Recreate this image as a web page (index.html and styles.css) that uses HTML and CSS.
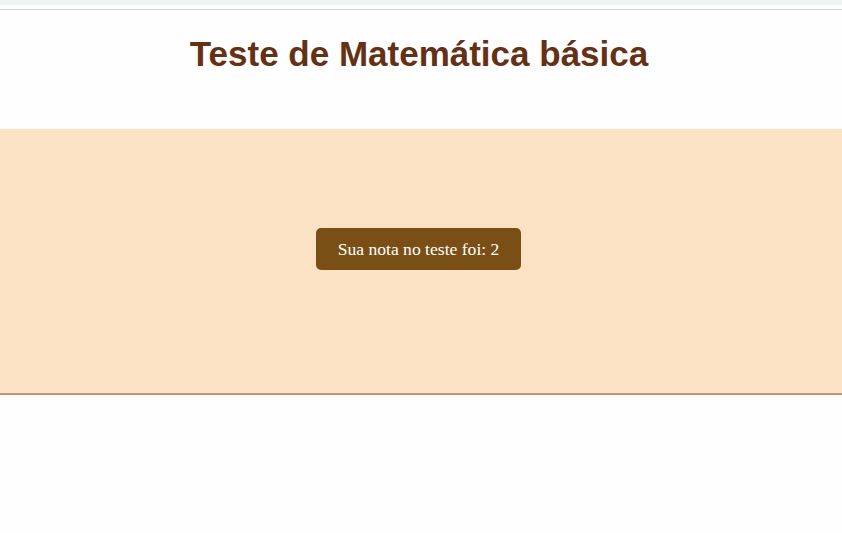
FILE: index.html
```html
<!DOCTYPE html>
<html lang="pt">
<head>
<meta charset="utf-8">
<title>Teste de Matemática básica</title>
<link rel="stylesheet" href="styles.css">
</head>
<body>
<div class="topbar"></div>
<div class="rule"></div>
<header class="header">
  <h1 class="title">Teste de Matemática básica</h1>
</header>
<section class="result">
  <div class="score">Sua nota no teste foi: 2</div>
</section>
</body>
</html>
```
FILE: styles.css
```css
html, body {
  margin: 0;
  padding: 0;
  background: #fefefe;
}
.topbar {
  height: 5px;
  background: #eef3f3;
}
.rule {
  margin-top: 4px;
  height: 1px;
  background: #d3d3d3;
}
.header {
  height: 119px;
  box-sizing: border-box;
  padding-top: 24px;
}
.title {
  margin: 0;
  text-align: center;
  font-family: "Liberation Sans", Arial, sans-serif;
  font-weight: bold;
  font-size: 35px;
  line-height: 40px;
  color: #643115;
  padding-right: 4px;
}
.result {
  background: #fce2c5;
  height: 266px;
  box-sizing: border-box;
  padding-top: 99px;
  display: flex;
  justify-content: center;
  align-items: flex-start;
  border-bottom: 2px solid #c9936b;
  box-shadow: 0 1px 0 #ecc8ab;
}
.score {
  background: #7a4f16;
  color: #ffffff;
  font-family: "Liberation Serif", "Times New Roman", serif;
  font-size: 17.6px;
  line-height: 20px;
  padding: 11px 22px;
  border-radius: 5px;
  margin-right: 5px;
}
```
